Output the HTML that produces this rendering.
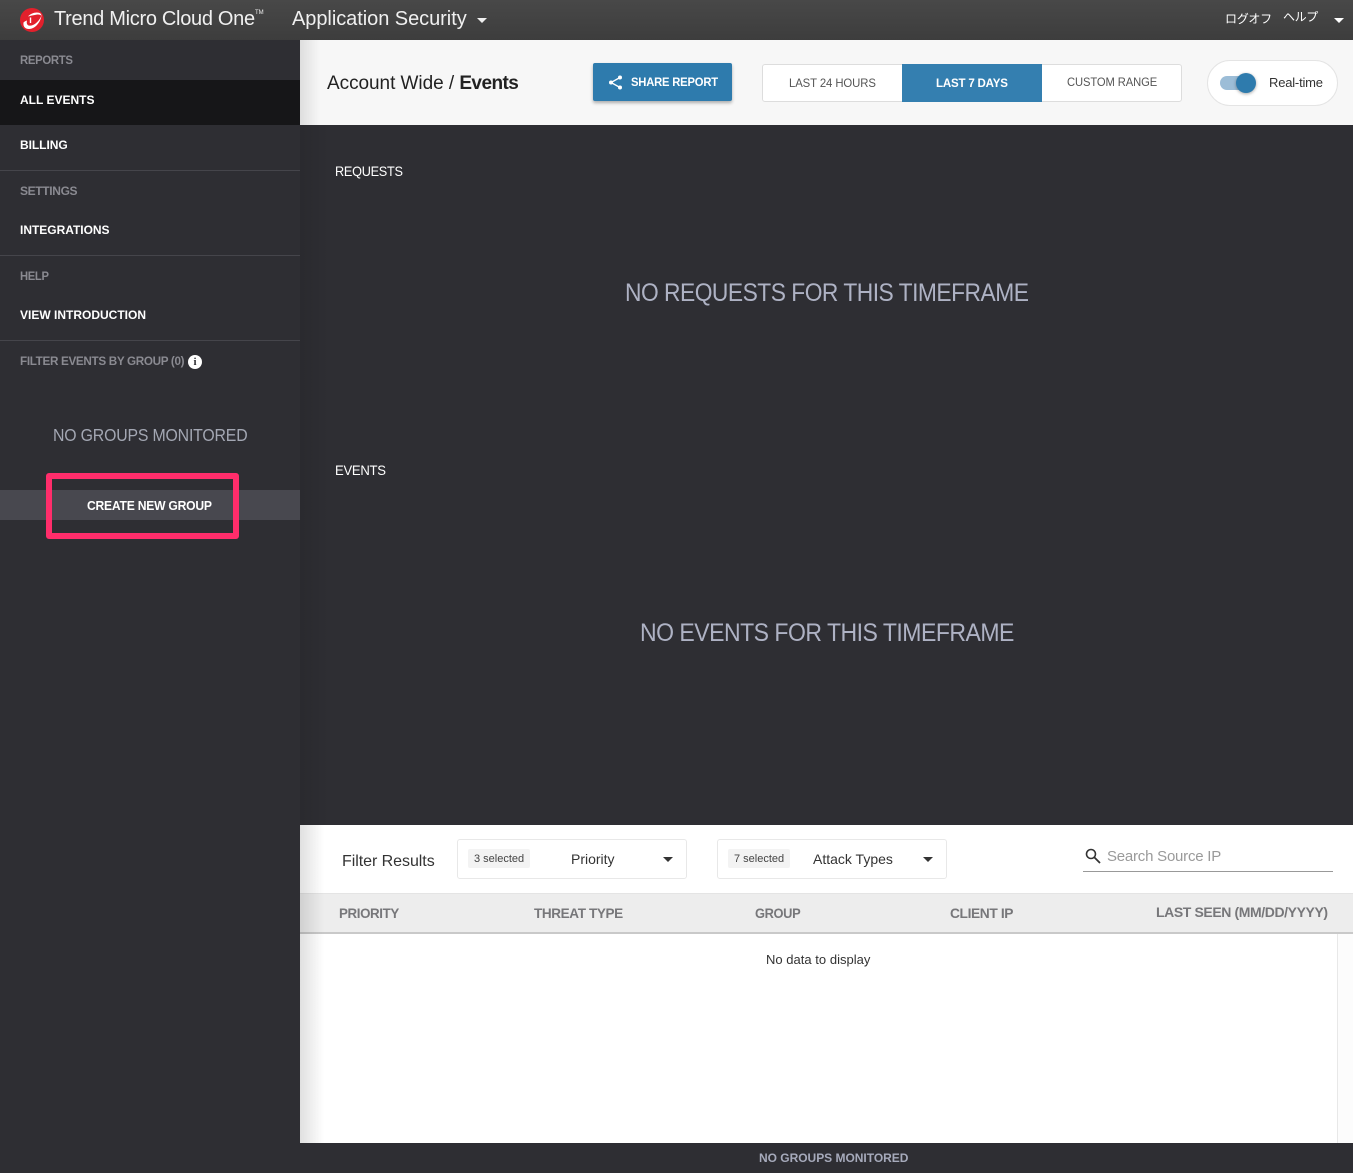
<!DOCTYPE html>
<html><head><meta charset="utf-8">
<style>
html,body{margin:0;padding:0;width:1353px;height:1173px;overflow:hidden;background:#2e2e33;font-family:"Liberation Sans","Noto Sans CJK JP",sans-serif}
div,span.t{position:absolute;box-sizing:border-box}
.t{white-space:nowrap;line-height:1;display:block;transform-origin:left center}
.b{font-weight:bold}
.nav{color:#fff;font-size:12px;font-weight:bold;letter-spacing:0}
.sec{color:#8a8a91;font-size:12px;font-weight:bold;letter-spacing:-.35px}
.line{left:0;width:300px;height:1px;background:#45454b}
.th{color:#77777a;font-size:14px;font-weight:bold;letter-spacing:-.4px}
.dd{background:#fff;border:1px solid #e8e8e8;border-radius:3px;height:40px;top:839px;width:230px}
.chip{background:#f3f3f3;border-radius:2px;top:849px;height:19px}
.tri{width:0;height:0;border-left:5px solid transparent;border-right:5px solid transparent;border-top:5px solid #333}
</style></head><body>
<div style="left:0;top:0;width:1353px;height:40px;background:linear-gradient(#484848,#3d3d3d)"></div>
<svg style="position:absolute;left:20px;top:8px" width="24" height="24" viewBox="0 0 24 24">
<circle cx="12" cy="12" r="12" fill="#e2202c"/>
<path d="M3.500 14.500C2.500 21 9 22.500 14 19.500C18 17 21 12 21.500 7.500C19.500 12.500 15.500 16.500 11.500 17.500C8 18.300 6 16.500 7 12.500C5.500 13 4.300 13.500 3.500 14.500Z" fill="#fff"/>
<path d="M8 8.500C10.500 5.500 15.500 3.800 19 4.800C21 5.400 21.500 7 21.500 8C20.500 6.500 18.500 6.300 16 6.700C13.500 7.100 10.500 7.700 8 8.500Z" fill="#fff"/>
<path d="M10.500 9.500V15" stroke="#fff" stroke-width="1.400"/>
</svg>
<span class="t" style="position:absolute;left:54px;top:9px;color:#f0f0f0;font-size:20px;letter-spacing:-.3px">Trend Micro Cloud One</span>
<span class="t" style="position:absolute;left:255px;top:10px;color:#f0f0f0;font-size:6px">TM</span>
<span class="t" style="position:absolute;left:292px;top:9px;color:#f0f0f0;font-size:20px;letter-spacing:-.05px">Application Security</span>
<div class="tri" style="left:477px;top:18px;border-top-color:#f0f0f0"></div>
<span class="t" style="position:absolute;left:1225px;top:13px;color:#fff;font-size:12px;letter-spacing:-.3px">ログオフ</span>
<span class="t" style="position:absolute;left:1283px;top:11px;color:#fff;font-size:12px;letter-spacing:-.4px">ヘルプ</span>
<div class="tri" style="left:1334px;top:18px;border-top-color:#fff"></div>

<div style="left:0;top:40px;width:300px;height:1133px;background:#2e2e33"></div>
<div style="left:0;top:80px;width:300px;height:45px;background:#161618"></div>
<span class="t sec" style="position:absolute;left:20px;top:54px;transform:scaleX(.946)">REPORTS</span>
<span class="t nav" style="position:absolute;left:20px;top:94px">ALL EVENTS</span>
<span class="t nav" style="position:absolute;left:20px;top:139px;letter-spacing:-.05px">BILLING</span>
<div class="line" style="top:170px"></div>
<span class="t sec" style="position:absolute;left:20px;top:185px">SETTINGS</span>
<span class="t nav" style="position:absolute;left:20px;top:224px;letter-spacing:-.02px">INTEGRATIONS</span>
<div class="line" style="top:255px"></div>
<span class="t sec" style="position:absolute;left:20px;top:270px;transform:scaleX(.935)">HELP</span>
<span class="t nav" style="position:absolute;left:20px;top:309px">VIEW INTRODUCTION</span>
<div class="line" style="top:340px"></div>
<span class="t sec" style="position:absolute;left:20px;top:355px;transform:scaleX(.976)">FILTER EVENTS BY GROUP (0)</span>
<div style="left:188px;top:355px;width:14px;height:14px;border-radius:50%;background:#fff;color:#2e2e33;font:bold 11px/14px 'Liberation Serif',serif;text-align:center">i</div>
<span class="t" style="position:absolute;left:53px;top:427px;color:#a3a7b3;font-size:17.500px;letter-spacing:-.2px;transform:scaleX(.906)">NO GROUPS MONITORED</span>
<div style="left:0;top:490px;width:300px;height:30px;background:#48484f"></div>
<span class="t b" style="position:absolute;left:87px;top:499px;color:#fff;font-size:13px;letter-spacing:-.25px;transform:scaleX(.933)">CREATE NEW GROUP</span>
<div style="left:46px;top:473px;width:193px;height:65.500px;border:6.500px solid #ff2d6b;border-radius:3px"></div>

<div style="left:300px;top:40px;width:1053px;height:85px;background:#f7f7f7"></div>
<span class="t" style="position:absolute;left:327px;top:74px;color:#222;font-size:19px;letter-spacing:-.05px">Account Wide / <b style="letter-spacing:-.55px">Events</b></span>
<div style="left:593px;top:63px;width:139px;height:38px;background:#2e7bad;border-radius:2px;box-shadow:0 2px 3px rgba(0,0,0,.3)"></div>
<svg style="position:absolute;left:608px;top:75px" width="15" height="15" viewBox="0 0 15 15"><path d="M12 2.500L3 7.500L12 12.500" fill="none" stroke="#fff" stroke-width="1.300"/><circle cx="12" cy="2.500" r="2" fill="#fff"/><circle cx="3" cy="7.500" r="2" fill="#fff"/><circle cx="12" cy="12.500" r="2" fill="#fff"/></svg>
<span class="t b" style="position:absolute;left:631px;top:76px;color:#fff;font-size:12px;letter-spacing:-.2px;transform:scaleX(.935)">SHARE REPORT</span>
<div style="left:762px;top:64px;width:420px;height:38px;background:#fff;border:1px solid #ddd;border-radius:3px"></div>
<div style="left:902px;top:64px;width:140px;height:38px;background:#347fb0"></div>
<span class="t" style="position:absolute;left:789px;top:77px;color:#555;font-size:12px;letter-spacing:-.1px;transform:scaleX(.945)">LAST 24 HOURS</span>
<span class="t b" style="position:absolute;left:936px;top:77px;color:#fff;font-size:12px;letter-spacing:-.2px;transform:scaleX(.96)">LAST 7 DAYS</span>
<span class="t" style="position:absolute;left:1066.500px;top:76px;color:#555;font-size:12px;letter-spacing:-.1px;transform:scaleX(.933)">CUSTOM RANGE</span>
<div style="left:1207px;top:60px;width:131px;height:46px;background:#fff;border:1px solid #e4e4e4;border-radius:23px"></div>
<div style="left:1220px;top:76px;width:28px;height:14px;background:#9cbdd7;border-radius:7px"></div>
<div style="left:1236px;top:73px;width:20px;height:20px;background:#2e7bad;border-radius:50%;box-shadow:0 1px 3px rgba(0,0,0,.35)"></div>
<span class="t" style="position:absolute;left:1269px;top:76px;color:#333;font-size:13px;letter-spacing:-.2px">Real-time</span>

<div style="left:300px;top:125px;width:30px;height:700px;background:linear-gradient(90deg,rgba(0,0,0,.09),rgba(0,0,0,0))"></div>
<span class="t" style="position:absolute;left:335px;top:164px;color:#fff;font-size:14px;letter-spacing:-.3px;transform:scaleX(.907)">REQUESTS</span>
<span class="t" style="position:absolute;left:625px;top:281px;color:#aeb2c4;font-size:25px;letter-spacing:-.55px;transform:scaleX(.912)">NO REQUESTS FOR THIS TIMEFRAME</span>
<span class="t" style="position:absolute;left:335px;top:463px;color:#fff;font-size:14px;letter-spacing:-.3px;transform:scaleX(.935)">EVENTS</span>
<span class="t" style="position:absolute;left:640px;top:621px;color:#aeb2c4;font-size:25px;letter-spacing:-.55px;transform:scaleX(.921)">NO EVENTS FOR THIS TIMEFRAME</span>

<div style="left:300px;top:825px;width:1053px;height:318px;background:#fff"></div>
<span class="t" style="position:absolute;left:342px;top:854px;color:#333;font-size:16px;letter-spacing:-.05px">Filter Results</span>
<div class="dd" style="left:457px"></div>
<div class="chip" style="left:468px;width:62px"></div>
<span class="t" style="position:absolute;left:474px;top:854px;color:#444;font-size:11px">3 selected</span>
<span class="t" style="position:absolute;left:571px;top:852px;color:#333;font-size:14px">Priority</span>
<div class="tri" style="left:663px;top:857px"></div>
<div class="dd" style="left:717px"></div>
<div class="chip" style="left:728px;width:62px"></div>
<span class="t" style="position:absolute;left:734px;top:854px;color:#444;font-size:11px">7 selected</span>
<span class="t" style="position:absolute;left:813px;top:852px;color:#333;font-size:14px">Attack Types</span>
<div class="tri" style="left:923px;top:857px"></div>
<svg style="position:absolute;left:1084px;top:847px" width="18" height="18" viewBox="0 0 18 18"><circle cx="7" cy="7" r="4.500" fill="none" stroke="#333" stroke-width="1.600"/><path d="M10.500 10.500L16 16" stroke="#333" stroke-width="1.800"/></svg>
<span class="t" style="position:absolute;left:1107px;top:849px;color:#9a9a9a;font-size:15px;letter-spacing:-.22px">Search Source IP</span>
<div style="left:1083px;top:871px;width:250px;height:1px;background:#999"></div>
<div style="left:300px;top:893px;width:1053px;height:41px;background:#ededed;border-top:1px solid #e4e4e4;border-bottom:2px solid #c9c9c9"></div>
<span class="t th" style="position:absolute;left:339px;top:906px;transform:scaleX(.952)">PRIORITY</span>
<span class="t th" style="position:absolute;left:534px;top:906px;transform:scaleX(.967)">THREAT TYPE</span>
<span class="t th" style="position:absolute;left:755px;top:906px;transform:scaleX(.918)">GROUP</span>
<span class="t th" style="position:absolute;left:950px;top:906px;transform:scaleX(.984)">CLIENT IP</span>
<span class="t th" style="position:absolute;left:1156px;top:905px">LAST SEEN (MM/DD/YYYY)</span>
<span class="t" style="position:absolute;left:766px;top:953px;color:#333;font-size:13px;letter-spacing:.02px">No data to display</span>
<div style="left:1337px;top:934px;width:16px;height:209px;background:#fcfcfc;border-left:1px solid #e8e8e8"></div>
<div style="left:300px;top:40px;width:20px;height:85px;background:linear-gradient(90deg,rgba(0,0,0,.1),rgba(0,0,0,0))"></div>
<div style="left:300px;top:825px;width:24px;height:318px;background:linear-gradient(90deg,rgba(0,0,0,.12),rgba(0,0,0,0))"></div>
<span class="t b" style="position:absolute;left:759px;top:1152px;color:#a6aabb;font-size:12px;letter-spacing:-.02px">NO GROUPS MONITORED</span>
</body></html>
